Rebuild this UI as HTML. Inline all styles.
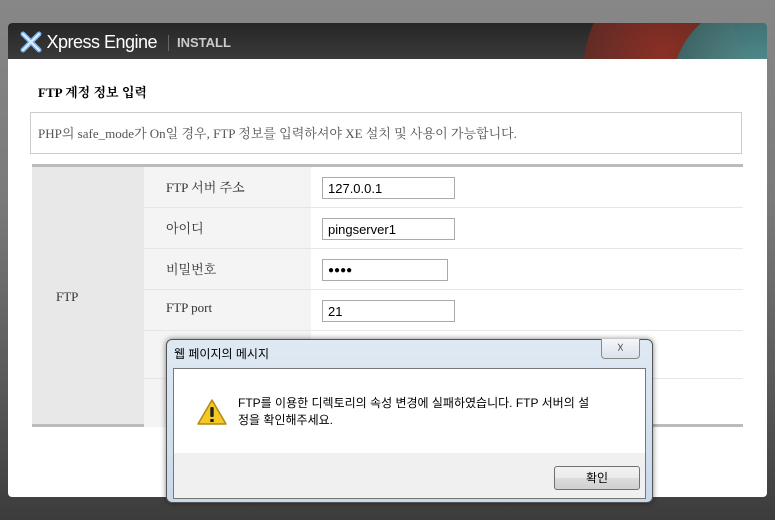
<!DOCTYPE html><html><head><meta charset="utf-8"><style>
*{margin:0;padding:0;box-sizing:border-box}
body{width:775px;height:520px;overflow:hidden;background:linear-gradient(#878787 0,#7a7a7a 200px,#565656 400px,#3c3c3c 520px);font-family:"Liberation Serif","Noto Serif CJK SC","Noto Sans CJK KR",serif;position:relative}
.panel{position:absolute;left:8px;top:23px;width:759px;height:474px;background:#fff;border-radius:4px;overflow:hidden}
.hdr{height:36px;background:linear-gradient(#262626,#3a3a3a);position:relative;overflow:hidden}
.hdr .c1{position:absolute;left:575px;top:-50px;width:160px;height:200px;border-radius:50%;background:radial-gradient(circle at 50% 40%,#9a2e22,#5a2a24 70%);opacity:.85}
.hdr .c2{position:absolute;left:665px;top:-30px;width:220px;height:180px;border-radius:50%;background:radial-gradient(circle at 40% 50%,#5a9ea0,#2e5c5e 70%);opacity:.9}
.logo{position:absolute;left:12px;top:8px;color:#fff;font-family:"Liberation Sans",sans-serif;font-size:18px;letter-spacing:-.5px}
.inst{position:absolute;left:160px;top:12px;color:#ccc;font-family:"Liberation Sans",sans-serif;font-size:13px;font-weight:bold;border-left:1px solid #666;padding-left:8px;height:16px;line-height:15px}
h1{position:absolute;left:30px;top:59px;font-size:13px;font-weight:bold;color:#000}
.note{position:absolute;left:22px;top:89px;width:712px;height:42px;border:1px solid #ccc;font-size:13px;color:#555;padding:10px 0 0 7px}
.tbl{position:absolute;left:24px;top:141px;width:711px;height:263px;border-top:3px solid #bbb;border-bottom:3px solid #bbb}
.c0{position:absolute;left:0;top:0;width:112px;height:100%;background:#e8e8e8;font-size:13px;color:#333;padding:122px 0 0 24px}
.row{position:absolute;left:112px;width:599px;height:41px;border-bottom:1px solid #e6e6e6}
.row .l{position:absolute;left:0;top:0;width:167px;height:100%;background:#f4f4f4;font-size:13px;color:#333;padding:10px 0 0 22px}
.row input{position:absolute;left:178px;top:10px;width:133px;height:22px;border:1px solid #aaa;font-family:"Liberation Sans",sans-serif;font-size:13px;padding-left:5px}
.dlg{position:absolute;left:166px;top:339px;width:487px;height:164px;border-radius:6px;background:linear-gradient(#dfe9f3,#c9d9ea);border:1px solid #555;box-shadow:0 0 6px rgba(0,0,0,.5)}
.dlg .t{position:absolute;left:7px;top:5px;font-family:"Liberation Sans","Noto Sans CJK KR",sans-serif;font-size:12px;color:#000}
.x{position:absolute;left:434px;top:-1px;width:39px;height:20px;border:1px solid #888;border-top:none;border-radius:0 0 4px 4px;background:linear-gradient(#f4f6f9,#dce3ec);text-align:center;font-family:"Liberation Sans",sans-serif;font-size:13px;color:#444;line-height:18px}
.in{position:absolute;left:6px;top:28px;width:473px;height:131px;background:#f0f0f0;border:1px solid #777}
.wh{position:absolute;left:0;top:0;width:100%;height:84px;background:#fff}
.msg{position:absolute;left:64px;top:26px;font-family:"Liberation Sans","Noto Sans CJK KR",sans-serif;font-size:12px;line-height:17px;color:#000}
.btn{position:absolute;left:380px;top:97px;width:86px;height:24px;border:1px solid #707070;border-radius:3px;background:linear-gradient(#f2f2f2,#ebebeb 50%,#dddddd 51%,#cfcfcf);text-align:center;font-family:"Liberation Sans","Noto Sans CJK KR",sans-serif;font-size:12px;line-height:22px}
</style></head><body>
<div class="panel">
<div class="hdr"><div class="c1"></div><div class="c2"></div>
<div class="logo"><svg width="22" height="22" viewBox="0 0 22 22" style="vertical-align:-5px"><path d="M3 3l16 16M19 3L3 19" stroke="#7ab3e8" stroke-width="5" stroke-linecap="round"/><path d="M3 3l16 16M19 3L3 19" stroke="#dfefff" stroke-width="2" stroke-linecap="round"/></svg> Xpress Engine</div>
<div class="inst">INSTALL</div></div>
<h1>FTP 계정 정보 입력</h1>
<div class="note">PHP의 safe_mode가 On일 경우, FTP 정보를 입력하셔야 XE 설치 및 사용이 가능합니다.</div>
<div class="tbl"><div class="c0">FTP</div>
<div class="row" style="top:0"><div class="l">FTP 서버 주소</div><input value="127.0.0.1"></div>
<div class="row" style="top:41px"><div class="l">아이디</div><input value="pingserver1"></div>
<div class="row" style="top:82px"><div class="l">비밀번호</div><input value="●●●●" style="width:126px;font-size:10px"></div>
<div class="row" style="top:123px"><div class="l">FTP port</div><input value="21"></div>
<div class="row" style="top:164px;height:48px"><div class="l"></div><input style="left:310px;top:14px;width:106px"></div>
<div class="row" style="top:212px;height:48px;border:none"><div class="l"></div></div>
</div></div>
<div class="dlg"><div class="t">웹 페이지의 메시지</div><div class="x">☓</div>
<div class="in"><div class="wh">
<svg style="position:absolute;left:22px;top:29px" width="32" height="28" viewBox="0 0 32 28"><path d="M16 2L30 26H2Z" fill="#f5c825" stroke="#b08a10" stroke-width="1.5" stroke-linejoin="round"/><rect x="14.3" y="9" width="3.4" height="10" rx="1" fill="#222"/><rect x="14.3" y="21" width="3.4" height="3" fill="#222"/></svg>
<div class="msg">FTP를 이용한 디렉토리의 속성 변경에 실패하였습니다. FTP 서버의 설<br>정을 확인해주세요.</div></div>
<div class="btn">확인</div></div></div>
</body></html>
